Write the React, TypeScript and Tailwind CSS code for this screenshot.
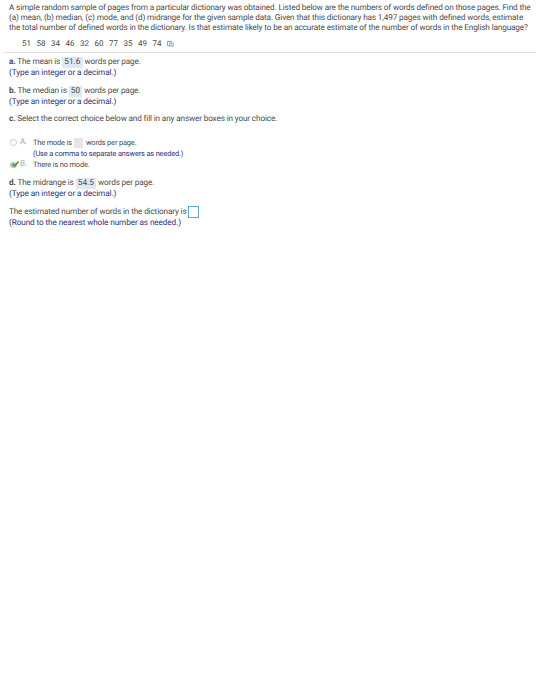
import React from "react";

const Hint = ({ children }: { children: React.ReactNode }) => (
  <div className="text-[#2b3275] leading-[11px] h-[11px] tracking-[-0.1px]">{children}</div>
);

const Ans = ({ children }: { children: React.ReactNode }) => (
  <span className="inline-block bg-[#dfe7f3] px-[2px] mx-[2px] h-[11px] leading-[11px] tracking-[0.1px]">{children}</span>
);

export default function App() {
  return (
    <div className="w-[540px] h-[695px] bg-white text-[#4a4a4a] text-[8.2px] tracking-[-0.14px] [text-rendering:geometricPrecision] font-['Roboto',sans-serif] overflow-hidden whitespace-nowrap">
      <div className="pl-[9px] pr-[4px] pt-[3px] leading-[10px]">
        <p>
          A simple random sample of pages from a particular dictionary was obtained. Listed below are the numbers of words defined on those pages. Find the
          <br />
          (a) mean, (b) median, (c) mode, and (d) midrange for the given sample data. Given that this dictionary has 1,497 pages with defined words, estimate
          <br />
          the total number of defined words in the dictionary. Is that estimate likely to be an accurate estimate of the number of words in the English language?
        </p>
        <div className="flex items-center mt-[5px] pl-[13px] h-[12px]">
          <div className="flex gap-[5.5px] text-[8px] tracking-normal">
            {[51, 58, 34, 46, 32, 60, 77, 35, 49, 74].map((n) => (
              <span key={n}>{n}</span>
            ))}
          </div>
          <svg width="7" height="6" viewBox="0 0 7 6" className="ml-[5px]">
            <rect x="0.5" y="0.5" width="4" height="4" fill="none" stroke="#8fa8cf" />
            <rect x="2.5" y="2" width="4" height="3.5" fill="#c5d3e8" stroke="#8fa8cf" strokeWidth="0.6" />
          </svg>
        </div>
      </div>
      <div className="mx-[4px] mt-[2px] h-px bg-[#e2e2e2]" />
      <div className="pl-[9px] pt-[4px]">
        <div className="leading-[11px] flex items-center h-[11px]">
          <span><b className="font-bold">a.</b> The mean is</span><Ans>51.6</Ans><span>words per page.</span>
        </div>
        <Hint>(Type an integer or a decimal.)</Hint>
        <div className="leading-[11px] flex items-center h-[11px] mt-[7px]">
          <span><b className="font-bold">b.</b> The median is</span><Ans>50</Ans><span>words per page.</span>
        </div>
        <Hint>(Type an integer or a decimal.)</Hint>
        <div className="leading-[11px] h-[11px] mt-[6px]">
          <b className="font-bold">c.</b> Select the correct choice below and fill in any answer boxes in your choice.
        </div>
        <div className="flex mt-[12px] h-[11px] items-center">
          <span className="w-[7px] h-[7px] ml-[1px] rounded-full border border-[#c9c9c9] bg-white" />
          <span className="text-[#aaaaaa] ml-[3px] w-[13px]">A.</span>
          <span className="text-[7.4px]">The mode is</span>
          <span className="w-[9px] h-[10px] bg-[#e6e6e6] mx-[3px] ml-[2px]" />
          <span className="text-[7.4px]">words per page.</span>
        </div>
        <div className="pl-[24px] text-[#2b3275] leading-[11px] h-[11px] text-[7.4px]">(Use a comma to separate answers as needed.)</div>
        <div className="flex h-[11px] items-center">
          <span className="relative w-[10px] h-[9px] ml-[1px]">
            <span className="absolute left-[0px] top-[2px] w-[7px] h-[6px] rounded-full bg-[#b9c8b9]" />
            <svg width="9" height="8" viewBox="0 0 9 8" className="absolute left-[1px] top-[0px]">
              <path d="M1.5 4 L3.5 6 L7.5 1.5" fill="none" stroke="#3f9a3f" strokeWidth="1.6" />
            </svg>
          </span>
          <span className="text-[#aaaaaa] w-[13px]">B.</span>
          <span className="text-[7.4px]">There is no mode.</span>
        </div>
        <div className="leading-[11px] flex items-center h-[11px] mt-[8px]">
          <span><b className="font-bold">d.</b> The midrange is</span><Ans>54.5</Ans><span>words per page.</span>
        </div>
        <Hint>(Type an integer or a decimal.)</Hint>
        <div className="flex items-center h-[12px] mt-[6px]">
          <span>The estimated number of words in the dictionary is</span>
          <span className="w-[11px] h-[12px] border-[1.5px] border-[#5fa6c9] bg-white ml-[1px]" />
        </div>
        <Hint>(Round to the nearest whole number as needed.)</Hint>
      </div>
    </div>
  );
}
